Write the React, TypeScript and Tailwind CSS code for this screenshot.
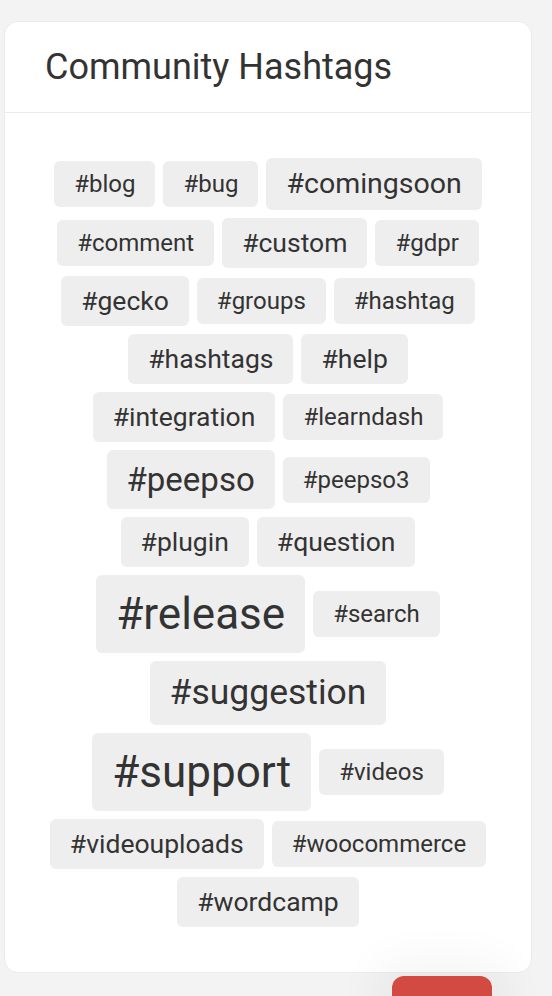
import React from 'react'

type Tag = { name: string; size: string }

// tag cloud: size classes by popularity
const sm = 'text-[24px] h-[46px]'
const md = 'text-[26.5px] h-[50px]'

const tags: Tag[] = [
  { name: 'blog', size: sm },
  { name: 'bug', size: sm },
  { name: 'comingsoon', size: 'text-[28.5px] h-[52px]' },
  { name: 'comment', size: sm },
  { name: 'custom', size: md },
  { name: 'gdpr', size: sm },
  { name: 'gecko', size: md },
  { name: 'groups', size: sm },
  { name: 'hashtag', size: sm },
  { name: 'hashtags', size: md },
  { name: 'help', size: md },
  { name: 'integration', size: md },
  { name: 'learndash', size: sm },
  { name: 'peepso', size: 'text-[33px] h-[59px]' },
  { name: 'peepso3', size: sm },
  { name: 'plugin', size: md },
  { name: 'question', size: md },
  { name: 'release', size: 'text-[44px] h-[78px]' },
  { name: 'search', size: sm },
  { name: 'suggestion', size: 'text-[35.5px] h-[64px]' },
  { name: 'support', size: 'text-[44px] h-[78px]' },
  { name: 'videos', size: sm },
  { name: 'videouploads', size: md },
  { name: 'woocommerce', size: sm },
  { name: 'wordcamp', size: md },
]

export default function App() {
  return (
    <div className="relative min-h-[996px] overflow-hidden bg-[#f3f3f3] px-1 pt-[21px] font-['Roboto',sans-serif] text-[#333]">
      <div className="w-[528px] rounded-[14px] border border-[#ebebeb] bg-white">
        <div className="flex h-[91px] items-center border-b border-[#ebebeb] px-10">
          <h2 className="text-[36px] leading-none font-normal">Community Hashtags</h2>
        </div>
        <div className="flex flex-wrap items-center justify-center gap-2 px-10 pt-[45px] pb-[45px]">
          {tags.map((t) => (
            <a
              key={t.name}
              href="#"
              className={`${t.size} flex items-center rounded-md bg-[#eeeeee] px-5 leading-none text-[#333]`}
            >
              #{t.name}
            </a>
          ))}
        </div>
      </div>
      <div className="absolute top-[976px] left-[392px] h-[40px] w-[100px] rounded-t-[12px] bg-[#d34a43] shadow-[0_0_40px_20px_rgba(0,0,0,0.04)]" />
    </div>
  )
}
